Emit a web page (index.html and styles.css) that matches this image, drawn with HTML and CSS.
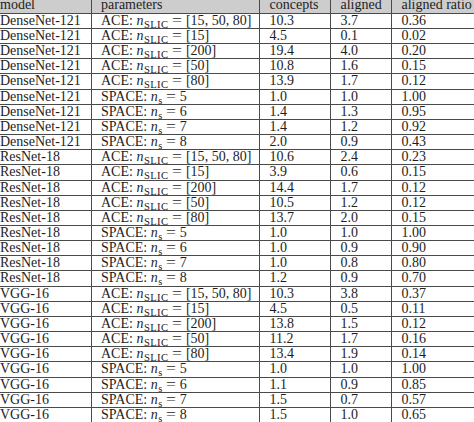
FILE: index.html
```html
<!DOCTYPE html>
<html>
<head>
<meta charset="utf-8">
<link rel="stylesheet" href="styles.css">
</head>
<body>
<div class="table">
  <div class="row head"><div class="c c1">model</div><div class="c c2">parameters</div><div class="c c3">concepts</div><div class="c c4">aligned</div><div class="c c5">aligned ratio</div></div>

  <div class="row"><div class="c c1">DenseNet-121</div><div class="c c2">ACE: <i>n</i><sub>SLIC</sub><span class="eq">=</span>[15<span class="cm">,</span>50<span class="cm">,</span>80]</div><div class="c c3">10.3</div><div class="c c4">3.7</div><div class="c c5">0.36</div></div>
  <div class="row"><div class="c c1">DenseNet-121</div><div class="c c2">ACE: <i>n</i><sub>SLIC</sub><span class="eq">=</span>[15]</div><div class="c c3">4.5</div><div class="c c4">0.1</div><div class="c c5">0.02</div></div>
  <div class="row"><div class="c c1">DenseNet-121</div><div class="c c2">ACE: <i>n</i><sub>SLIC</sub><span class="eq">=</span>[200]</div><div class="c c3">19.4</div><div class="c c4">4.0</div><div class="c c5">0.20</div></div>
  <div class="row"><div class="c c1">DenseNet-121</div><div class="c c2">ACE: <i>n</i><sub>SLIC</sub><span class="eq">=</span>[50]</div><div class="c c3">10.8</div><div class="c c4">1.6</div><div class="c c5">0.15</div></div>
  <div class="row"><div class="c c1">DenseNet-121</div><div class="c c2">ACE: <i>n</i><sub>SLIC</sub><span class="eq">=</span>[80]</div><div class="c c3">13.9</div><div class="c c4">1.7</div><div class="c c5">0.12</div></div>
  <div class="row"><div class="c c1">DenseNet-121</div><div class="c c2">SPACE: <i>n</i><sub class="s">s</sub><span class="eq">=</span>5</div><div class="c c3">1.0</div><div class="c c4">1.0</div><div class="c c5">1.00</div></div>
  <div class="row"><div class="c c1">DenseNet-121</div><div class="c c2">SPACE: <i>n</i><sub class="s">s</sub><span class="eq">=</span>6</div><div class="c c3">1.4</div><div class="c c4">1.3</div><div class="c c5">0.95</div></div>
  <div class="row"><div class="c c1">DenseNet-121</div><div class="c c2">SPACE: <i>n</i><sub class="s">s</sub><span class="eq">=</span>7</div><div class="c c3">1.4</div><div class="c c4">1.2</div><div class="c c5">0.92</div></div>
  <div class="row"><div class="c c1">DenseNet-121</div><div class="c c2">SPACE: <i>n</i><sub class="s">s</sub><span class="eq">=</span>8</div><div class="c c3">2.0</div><div class="c c4">0.9</div><div class="c c5">0.43</div></div>

  <div class="row"><div class="c c1">ResNet-18</div><div class="c c2">ACE: <i>n</i><sub>SLIC</sub><span class="eq">=</span>[15<span class="cm">,</span>50<span class="cm">,</span>80]</div><div class="c c3">10.6</div><div class="c c4">2.4</div><div class="c c5">0.23</div></div>
  <div class="row"><div class="c c1">ResNet-18</div><div class="c c2">ACE: <i>n</i><sub>SLIC</sub><span class="eq">=</span>[15]</div><div class="c c3">3.9</div><div class="c c4">0.6</div><div class="c c5">0.15</div></div>
  <div class="row"><div class="c c1">ResNet-18</div><div class="c c2">ACE: <i>n</i><sub>SLIC</sub><span class="eq">=</span>[200]</div><div class="c c3">14.4</div><div class="c c4">1.7</div><div class="c c5">0.12</div></div>
  <div class="row"><div class="c c1">ResNet-18</div><div class="c c2">ACE: <i>n</i><sub>SLIC</sub><span class="eq">=</span>[50]</div><div class="c c3">10.5</div><div class="c c4">1.2</div><div class="c c5">0.12</div></div>
  <div class="row"><div class="c c1">ResNet-18</div><div class="c c2">ACE: <i>n</i><sub>SLIC</sub><span class="eq">=</span>[80]</div><div class="c c3">13.7</div><div class="c c4">2.0</div><div class="c c5">0.15</div></div>
  <div class="row"><div class="c c1">ResNet-18</div><div class="c c2">SPACE: <i>n</i><sub class="s">s</sub><span class="eq">=</span>5</div><div class="c c3">1.0</div><div class="c c4">1.0</div><div class="c c5">1.00</div></div>
  <div class="row"><div class="c c1">ResNet-18</div><div class="c c2">SPACE: <i>n</i><sub class="s">s</sub><span class="eq">=</span>6</div><div class="c c3">1.0</div><div class="c c4">0.9</div><div class="c c5">0.90</div></div>
  <div class="row"><div class="c c1">ResNet-18</div><div class="c c2">SPACE: <i>n</i><sub class="s">s</sub><span class="eq">=</span>7</div><div class="c c3">1.0</div><div class="c c4">0.8</div><div class="c c5">0.80</div></div>
  <div class="row"><div class="c c1">ResNet-18</div><div class="c c2">SPACE: <i>n</i><sub class="s">s</sub><span class="eq">=</span>8</div><div class="c c3">1.2</div><div class="c c4">0.9</div><div class="c c5">0.70</div></div>

  <div class="row"><div class="c c1">VGG-16</div><div class="c c2">ACE: <i>n</i><sub>SLIC</sub><span class="eq">=</span>[15<span class="cm">,</span>50<span class="cm">,</span>80]</div><div class="c c3">10.3</div><div class="c c4">3.8</div><div class="c c5">0.37</div></div>
  <div class="row"><div class="c c1">VGG-16</div><div class="c c2">ACE: <i>n</i><sub>SLIC</sub><span class="eq">=</span>[15]</div><div class="c c3">4.5</div><div class="c c4">0.5</div><div class="c c5">0.11</div></div>
  <div class="row"><div class="c c1">VGG-16</div><div class="c c2">ACE: <i>n</i><sub>SLIC</sub><span class="eq">=</span>[200]</div><div class="c c3">13.8</div><div class="c c4">1.5</div><div class="c c5">0.12</div></div>
  <div class="row"><div class="c c1">VGG-16</div><div class="c c2">ACE: <i>n</i><sub>SLIC</sub><span class="eq">=</span>[50]</div><div class="c c3">11.2</div><div class="c c4">1.7</div><div class="c c5">0.16</div></div>
  <div class="row"><div class="c c1">VGG-16</div><div class="c c2">ACE: <i>n</i><sub>SLIC</sub><span class="eq">=</span>[80]</div><div class="c c3">13.4</div><div class="c c4">1.9</div><div class="c c5">0.14</div></div>
  <div class="row"><div class="c c1">VGG-16</div><div class="c c2">SPACE: <i>n</i><sub class="s">s</sub><span class="eq">=</span>5</div><div class="c c3">1.0</div><div class="c c4">1.0</div><div class="c c5">1.00</div></div>
  <div class="row"><div class="c c1">VGG-16</div><div class="c c2">SPACE: <i>n</i><sub class="s">s</sub><span class="eq">=</span>6</div><div class="c c3">1.1</div><div class="c c4">0.9</div><div class="c c5">0.85</div></div>
  <div class="row"><div class="c c1">VGG-16</div><div class="c c2">SPACE: <i>n</i><sub class="s">s</sub><span class="eq">=</span>7</div><div class="c c3">1.5</div><div class="c c4">0.7</div><div class="c c5">0.57</div></div>
  <div class="row"><div class="c c1">VGG-16</div><div class="c c2">SPACE: <i>n</i><sub class="s">s</sub><span class="eq">=</span>8</div><div class="c c3">1.5</div><div class="c c4">1.0</div><div class="c c5">0.65</div></div>
</div>
</body>
</html>
```

FILE: styles.css
```css
html, body {
  margin: 0;
  padding: 0;
  background: #ffffff;
  overflow: hidden;
}
body {
  width: 474px;
  height: 422px;
  font-family: "Liberation Serif", "DejaVu Serif", serif;
  font-size: 14px;
  color: #1e1e1e;
}
.table {
  display: flex;
  flex-direction: column;
  width: 540px;
}
.row {
  display: grid;
  grid-template-columns: 90.5px 168.5px 71px 61px 1fr;
  height: 15.17px;
  box-sizing: border-box;
  border-bottom: 1px solid #4a4a4a;
  line-height: 14.17px;
  white-space: nowrap;
}
.row.head {
  height: 13.8px;
  background: #cdcdcd;
  line-height: 9.4px;
}
.c {
  box-sizing: border-box;
  padding-left: 9.5px;
}
.c1 {
  padding-left: 0;
}
.c2, .c3, .c4, .c5 {
  border-left: 1px solid #4a4a4a;
}
i {
  font-style: italic;
  margin-right: 0.5px;
}
sub {
  font-size: 10.6px;
  vertical-align: -3px;
  line-height: 1;
  letter-spacing: 0.4px;
}
sub.s {
  font-size: 10.5px;
  letter-spacing: 0;
}
.eq {
  display: inline-block;
  margin: 0 4.6px 0 5px;
  transform: scaleX(1.25);
}
.cm {
  margin-right: 3.6px;
}
```
